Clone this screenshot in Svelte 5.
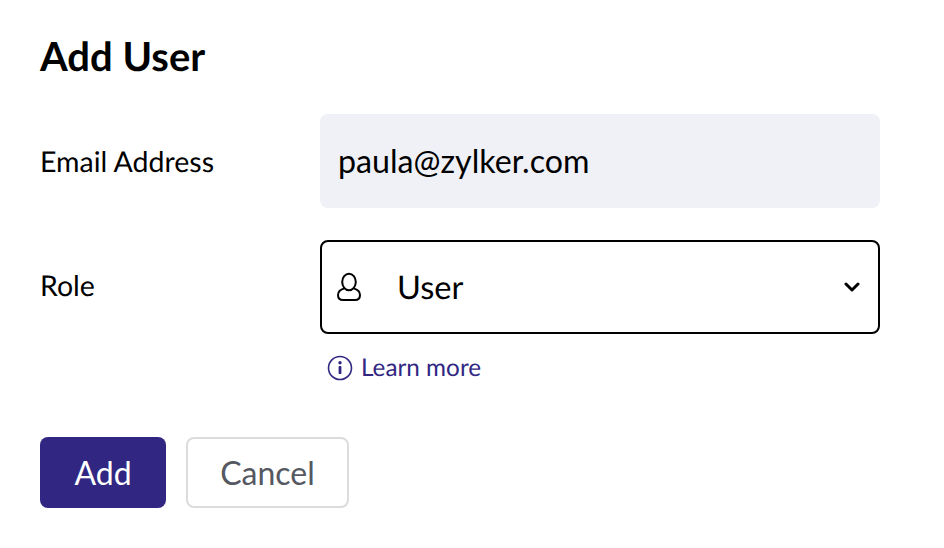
<script lang="ts">
  let email = $state('paula@zylker.com');
</script>

<div class="form">
  <h1>Add User</h1>

  <div class="row email-row">
    <label class="field-label" for="email">Email Address</label>
    <input id="email" class="email-input" type="text" bind:value={email} />
  </div>

  <div class="row role-row">
    <span class="field-label">Role</span>
    <div class="role-col">
      <div class="select">
        <svg class="user-icon" width="26" height="30" viewBox="0 0 26 30" fill="none" stroke="#000" stroke-width="2">
          <ellipse cx="13" cy="10" rx="6.8" ry="8.2" />
          <path d="M8.4 16.4 C4.6 17.4 2 19.6 2 23 C2 26 3.8 28 7 28 H19 C22.2 28 24 26 24 23 C24 19.6 21.4 17.4 17.6 16.4" />
        </svg>
        <span class="select-value">User</span>
        <svg class="chevron" width="16" height="10" viewBox="0 0 16 10" fill="none" stroke="#000" stroke-width="3" stroke-linecap="round" stroke-linejoin="round">
          <path d="M2 2 L8 8 L14 2" />
        </svg>
      </div>
      <div class="learn">
        <svg width="26" height="26" viewBox="0 0 26 26" fill="none">
          <circle cx="13" cy="13" r="11.5" stroke="#312783" stroke-width="1.6" />
          <circle cx="13" cy="7.8" r="1.7" fill="#312783" />
          <rect x="11.6" y="11" width="2.8" height="8" rx="0.8" fill="#312783" />
        </svg>
        <span>Learn more</span>
      </div>
    </div>
  </div>

  <div class="actions">
    <button class="btn primary">Add</button>
    <button class="btn secondary">Cancel</button>
  </div>
</div>

<style>
  :global(body) {
    background: #fff;
    font-family: Lato, "Liberation Sans", sans-serif;
    text-rendering: geometricPrecision;
  }

  .form {
    padding: 33px 64px 0 40px;
    color: #000;
  }

  h1 {
    margin: 0 0 35px;
    font-size: 40px;
    line-height: 46px;
    font-weight: 700;
  }

  .row {
    display: flex;
  }

  .field-label {
    width: 280px;
    flex: none;
    font-size: 28.5px;
    line-height: 34px;
  }

  .email-row {
    align-items: center;
    margin-bottom: 32px;
  }

  .email-row .field-label {
    padding-top: 2px;
  }

  .email-input {
    flex: 1;
    min-width: 0;
    height: 94px;
    box-sizing: border-box;
    padding: 0 18px 2px;
    border: none;
    outline: none;
    border-radius: 8px;
    background: #f0f1f6;
    font-family: inherit;
    font-size: 32.2px;
    color: #000;
  }

  .role-row .field-label {
    margin-top: 29px;
  }

  .role-col {
    flex: 1;
    min-width: 0;
  }

  .select {
    display: flex;
    align-items: center;
    height: 94px;
    box-sizing: border-box;
    border: 2px solid #000;
    border-radius: 8px;
    padding: 0 18px 0 14px;
  }

  .user-icon {
    flex: none;
    margin-right: 35px;
  }

  .select-value {
    flex: 1;
    font-size: 32.6px;
    padding-bottom: 2px;
  }

  .learn {
    display: flex;
    align-items: center;
    gap: 8px;
    margin: 19px 0 0 7px;
    font-size: 24.3px;
    line-height: 30px;
    color: #312783;
  }

  .actions {
    display: flex;
    gap: 20px;
    margin-top: 54px;
  }

  .btn {
    height: 71px;
    box-sizing: border-box;
    border-radius: 8px;
    font-family: inherit;
    font-size: 32px;
    padding: 0;
  }

  .primary {
    width: 126px;
    border: none;
    background: #312783;
    color: #fff;
  }

  .secondary {
    width: 163px;
    border: 2px solid #dcdcdc;
    background: #fff;
    color: #555861;
  }
</style>
